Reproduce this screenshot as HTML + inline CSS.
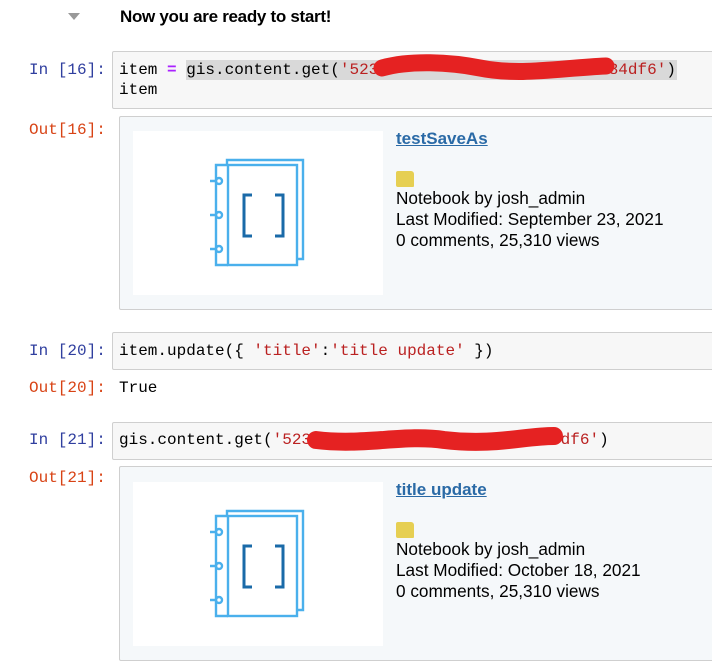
<!DOCTYPE html>
<html><head><style>
body{margin:0;width:712px;height:668px;background:#fff;position:relative;overflow:hidden;font-family:"Liberation Sans",Arial,sans-serif}
.a{position:absolute}
.mono{font-family:"Liberation Mono",monospace;font-size:16px;line-height:20px;white-space:pre}
.pin{color:#303f9f}.pout{color:#d84315}
.box{background:#f7f7f7;border:1px solid #cfcfcf;border-radius:2px}
.s{color:#ba2121}
.card{background:#f5f8fa;border:1px solid #cfcfcf;border-radius:2px}
.thumb{background:#fff}
.title{color:#2a6aa6;font-weight:bold;text-decoration:underline;font-size:17px}
.txt{font-size:17.2px;line-height:21px;color:#000}
.patch{background:#e6cf52;width:18px;height:16px;border-radius:2px 3px 1px 2px}
</style></head><body>
<div class="a" style="left:68px;top:13px;width:0;height:0;border-left:6px solid transparent;border-right:6px solid transparent;border-top:7px solid #999"></div>
<div class="a" style="left:120px;top:7px;font-size:17px;font-weight:bold;letter-spacing:-0.3px">Now you are ready to start!</div>

<div class="a box" style="left:112px;top:51px;width:605px;height:56px"></div>
<div class="a" style="left:186px;top:60px;width:491px;height:20px;background:#d9d9d9"></div>
<div class="a mono pin" style="left:29px;top:60px">In [16]:</div>
<div class="a mono" style="left:119px;top:60px">item <b style="color:#aa22ff">=</b> gis.content.get(<span class="s">'523                        84df6'</span>)
item</div>
<svg class="a" style="left:370px;top:54px" width="250" height="30"><path d="M12 14 C40 6 80 8 110 14 C150 22 190 14 236 12" stroke="#e52222" stroke-width="17" fill="none" stroke-linecap="round"/></svg>

<div class="a mono pout" style="left:29px;top:120px">Out[16]:</div>
<div class="a card" style="left:119px;top:116px;width:600px;height:192px"></div>
<div class="a thumb" style="left:133px;top:131px;width:250px;height:164px"></div>
<svg class="a" style="left:210px;top:155px" width="100" height="115"><g fill="none" stroke="#4ab0ec" stroke-width="2.4"><path d="M17 10 V5 H93 V104 H87"/><rect x="18" y="10" width="69" height="100" fill="#fff"/><path d="M18 10 H6 V110 H18"/><path d="M0 26 H6 M0 60 H6 M0 94 H6"/><circle cx="9" cy="26" r="3"/><circle cx="9" cy="60" r="3"/><circle cx="9" cy="94" r="3"/></g><g fill="none" stroke="#1a6aa8" stroke-width="3"><path d="M42 40 H34 V81 H42 M65 40 H73 V81 H65"/></g></svg>
<div class="a title" style="left:396px;top:129px">testSaveAs</div>
<div class="a patch" style="left:396px;top:171px"></div>
<div class="a txt" style="left:396px;top:188px">Notebook by josh_admin<br>Last Modified: September 23, 2021<br>0 comments, 25,310 views</div>

<div class="a box" style="left:112px;top:332px;width:605px;height:36px"></div>
<div class="a mono pin" style="left:29px;top:341px">In [20]:</div>
<div class="a mono" style="left:119px;top:341px">item.update({ <span class="s">'title'</span>:<span class="s">'title update'</span> })</div>
<div class="a mono pout" style="left:29px;top:378px">Out[20]:</div>
<div class="a mono" style="left:119px;top:378px">True</div>

<div class="a box" style="left:112px;top:422px;width:605px;height:36px"></div>
<div class="a mono pin" style="left:29px;top:430px">In [21]:</div>
<div class="a mono" style="left:119px;top:430px">gis.content.get(<span class="s">'523                         4df6'</span>)</div>
<svg class="a" style="left:304px;top:426px" width="262" height="30"><path d="M12 14 C60 20 100 8 140 14 C190 20 220 10 250 10" stroke="#e52222" stroke-width="18" fill="none" stroke-linecap="round"/></svg>

<div class="a mono pout" style="left:29px;top:468px">Out[21]:</div>
<div class="a card" style="left:119px;top:466px;width:600px;height:193px"></div>
<div class="a thumb" style="left:133px;top:482px;width:250px;height:164px"></div>
<svg class="a" style="left:210px;top:506px" width="100" height="115"><g fill="none" stroke="#4ab0ec" stroke-width="2.4"><path d="M17 10 V5 H93 V104 H87"/><rect x="18" y="10" width="69" height="100" fill="#fff"/><path d="M18 10 H6 V110 H18"/><path d="M0 26 H6 M0 60 H6 M0 94 H6"/><circle cx="9" cy="26" r="3"/><circle cx="9" cy="60" r="3"/><circle cx="9" cy="94" r="3"/></g><g fill="none" stroke="#1a6aa8" stroke-width="3"><path d="M42 40 H34 V81 H42 M65 40 H73 V81 H65"/></g></svg>
<div class="a title" style="left:396px;top:480px">title update</div>
<div class="a patch" style="left:396px;top:522px"></div>
<div class="a txt" style="left:396px;top:539px">Notebook by josh_admin<br>Last Modified: October 18, 2021<br>0 comments, 25,310 views</div>
</body></html>
